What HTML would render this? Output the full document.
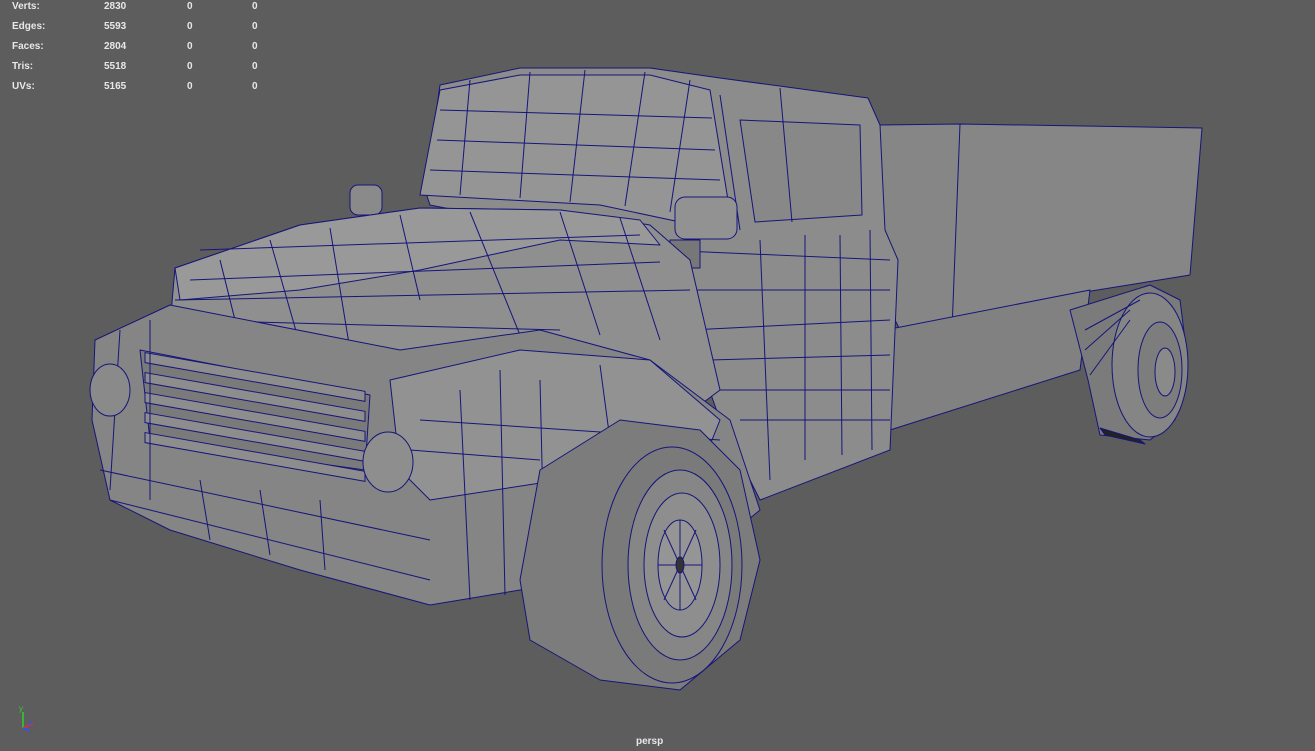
<!DOCTYPE html>
<html><head><style>
html,body{margin:0;padding:0;width:1315px;height:751px;overflow:hidden;background:#5d5d5d;font-family:"Liberation Sans",sans-serif}
.st{position:absolute;color:#e8e8e8;font-size:10px;font-weight:bold}
</style></head><body>
<div class="st" style="left:12px;top:1px">Verts:</div><div class="st" style="left:104px;top:1px">2830</div><div class="st" style="left:187px;top:1px">0</div><div class="st" style="left:252px;top:1px">0</div>
<div class="st" style="left:12px;top:21px">Edges:</div><div class="st" style="left:104px;top:21px">5593</div><div class="st" style="left:187px;top:21px">0</div><div class="st" style="left:252px;top:21px">0</div>
<div class="st" style="left:12px;top:41px">Faces:</div><div class="st" style="left:104px;top:41px">2804</div><div class="st" style="left:187px;top:41px">0</div><div class="st" style="left:252px;top:41px">0</div>
<div class="st" style="left:12px;top:61px">Tris:</div><div class="st" style="left:104px;top:61px">5518</div><div class="st" style="left:187px;top:61px">0</div><div class="st" style="left:252px;top:61px">0</div>
<div class="st" style="left:12px;top:81px">UVs:</div><div class="st" style="left:104px;top:81px">5165</div><div class="st" style="left:187px;top:81px">0</div><div class="st" style="left:252px;top:81px">0</div>
<div class="st" style="left:636px;top:736px;font-weight:bold">persp</div>
<svg width="1315" height="751" style="position:absolute;left:0;top:0">
<g stroke="#15157a" stroke-width="1" stroke-linejoin="round">
<polygon points="878,125 960,124 1202,128 1190,275 1085,292 900,330 885,300" fill="#868686"/>
<line x1="960" y1="124" x2="952" y2="330" />
<polygon points="885,330 1090,290 1080,370 890,430" fill="#818181"/>
<polygon points="1070,310 1150,285 1180,300 1185,340 1175,420 1150,440 1100,435 1088,380" fill="#7b7b7b"/>
<ellipse cx="1150" cy="365" rx="38" ry="72" fill="#858585"/>
<ellipse cx="1160" cy="370" rx="22" ry="48" fill="#7d7d7d"/>
<ellipse cx="1165" cy="372" rx="10" ry="24" fill="#8a8a8a"/>
<line x1="1085" y1="330" x2="1140" y2="300"/><line x1="1085" y1="350" x2="1130" y2="310"/><line x1="1090" y1="375" x2="1130" y2="320"/>
<polygon points="1100,428 1140,440 1145,444 1105,435" fill="#222"/>
<polygon points="440,85 520,68 650,68 720,78 868,98 880,125 885,230 898,260 890,450 760,500 720,420 660,250 430,205 425,190" fill="#8c8c8c"/>
<polygon points="440,90 520,75 650,75 710,90 728,200 680,222 600,205 420,195" fill="#959595"/>
<polygon points="740,120 860,125 862,215 755,222" fill="#888"/>
<line x1="805" y1="235" x2="805" y2="460"/><line x1="870" y1="230" x2="872" y2="450"/><line x1="760" y1="240" x2="770" y2="480"/><line x1="840" y1="235" x2="842" y2="455"/>
<line x1="720" y1="95" x2="740" y2="230"/><line x1="780" y1="88" x2="792" y2="222"/>
<line x1="660" y1="250" x2="890" y2="260"/><line x1="690" y1="330" x2="890" y2="320"/><line x1="720" y1="390" x2="890" y2="390"/><line x1="680" y1="290" x2="890" y2="290"/><line x1="710" y1="360" x2="890" y2="355"/><line x1="740" y1="420" x2="890" y2="420"/>
<line x1="470" y1="80" x2="460" y2="195"/><line x1="530" y1="72" x2="520" y2="198"/><line x1="585" y1="70" x2="570" y2="202"/><line x1="645" y1="72" x2="625" y2="206"/><line x1="690" y1="80" x2="670" y2="212"/>
<line x1="437" y1="140" x2="715" y2="150"/><line x1="440" y1="110" x2="712" y2="118"/><line x1="430" y1="170" x2="720" y2="180"/>
<rect x="350" y="185" width="32" height="30" rx="8" fill="#8a8a8a"/>
<rect x="675" y="197" width="62" height="42" rx="10" fill="#929292"/>
<rect x="670" y="240" width="30" height="28" fill="#777"/>
<polygon points="175,268 300,225 420,208 560,210 650,225 690,260 720,390 680,420 560,340 440,350 360,360 170,325" fill="#8f8f8f"/>
<polygon points="175,268 300,225 420,208 560,210 640,220 660,245 560,240 420,270 300,290 180,300" fill="#999"/>
<line x1="220" y1="260" x2="240" y2="340"/><line x1="270" y1="240" x2="300" y2="345"/><line x1="330" y1="228" x2="350" y2="350"/><line x1="400" y1="215" x2="420" y2="300"/><line x1="470" y1="212" x2="520" y2="335"/><line x1="560" y1="212" x2="600" y2="335"/><line x1="620" y1="218" x2="660" y2="340"/>
<line x1="175" y1="300" x2="690" y2="290"/><line x1="180" y1="320" x2="560" y2="330"/><line x1="190" y1="280" x2="660" y2="262"/><line x1="200" y1="250" x2="640" y2="235"/>
<polygon points="95,340 170,305 400,350 540,330 650,360 730,420 760,510 700,560 520,590 430,605 300,570 170,530 110,500 92,420" fill="#858585"/>
<polygon points="140,350 370,395 365,470 150,440" fill="#7a7a7a"/>
<g fill="#8d8d8d">
<rect x="145" y="355" width="220" height="10" transform="skewY(10) translate(0,-28)"/>
<rect x="145" y="375" width="220" height="10" transform="skewY(10) translate(0,-28)"/>
<rect x="145" y="395" width="220" height="10" transform="skewY(10) translate(0,-28)"/>
<rect x="145" y="415" width="220" height="10" transform="skewY(10) translate(0,-28)"/>
<rect x="145" y="435" width="220" height="10" transform="skewY(10) translate(0,-28)"/>
</g>
<polygon points="390,380 520,350 650,360 720,420 700,470 560,480 430,500 400,470" fill="#929292"/>
<line x1="100" y1="470" x2="430" y2="540"/><line x1="110" y1="500" x2="430" y2="580"/><line x1="420" y1="420" x2="720" y2="440"/><line x1="410" y1="450" x2="540" y2="460"/>
<line x1="200" y1="480" x2="210" y2="540"/><line x1="260" y1="490" x2="270" y2="555"/><line x1="320" y1="500" x2="325" y2="570"/><line x1="460" y1="390" x2="470" y2="600"/><line x1="540" y1="380" x2="545" y2="590"/><line x1="500" y1="370" x2="505" y2="595"/><line x1="600" y1="365" x2="610" y2="440"/>
<line x1="120" y1="330" x2="110" y2="490"/><line x1="150" y1="320" x2="150" y2="500"/>
<ellipse cx="110" cy="390" rx="20" ry="26" fill="#8a8a8a"/>
<ellipse cx="388" cy="462" rx="25" ry="30" fill="#8e8e8e"/>
<polygon points="540,470 620,420 700,430 740,470 760,560 740,640 680,690 600,680 530,640 520,580" fill="#7c7c7c"/>
<ellipse cx="672" cy="565" rx="70" ry="118" fill="#7a7a7a"/>
<ellipse cx="680" cy="565" rx="52" ry="95" fill="#868686"/>
<ellipse cx="682" cy="565" rx="38" ry="72" fill="#8e8e8e"/>
<ellipse cx="680" cy="565" rx="22" ry="45" fill="#959595"/>
<g>
<line x1="680" y1="520" x2="680" y2="610"/><line x1="658" y1="565" x2="702" y2="565"/><line x1="664" y1="530" x2="696" y2="600"/><line x1="696" y1="530" x2="664" y2="600"/>
</g>
<ellipse cx="680" cy="565" rx="4" ry="8" fill="#333"/>
</g>
<g stroke-width="1.5">
<line x1="23" y1="712" x2="23" y2="728" stroke="#30d030"/>
<line x1="23" y1="728" x2="33" y2="724" stroke="#e03030"/>
<line x1="23" y1="728" x2="30" y2="731" stroke="#3050ff"/>
</g>
<text x="19" y="711" fill="#30d030" font-size="8" font-family="Liberation Sans">y</text>
<text x="28" y="726" fill="#3050ff" font-size="8" font-family="Liberation Sans">z</text>
</svg>
</body></html>
